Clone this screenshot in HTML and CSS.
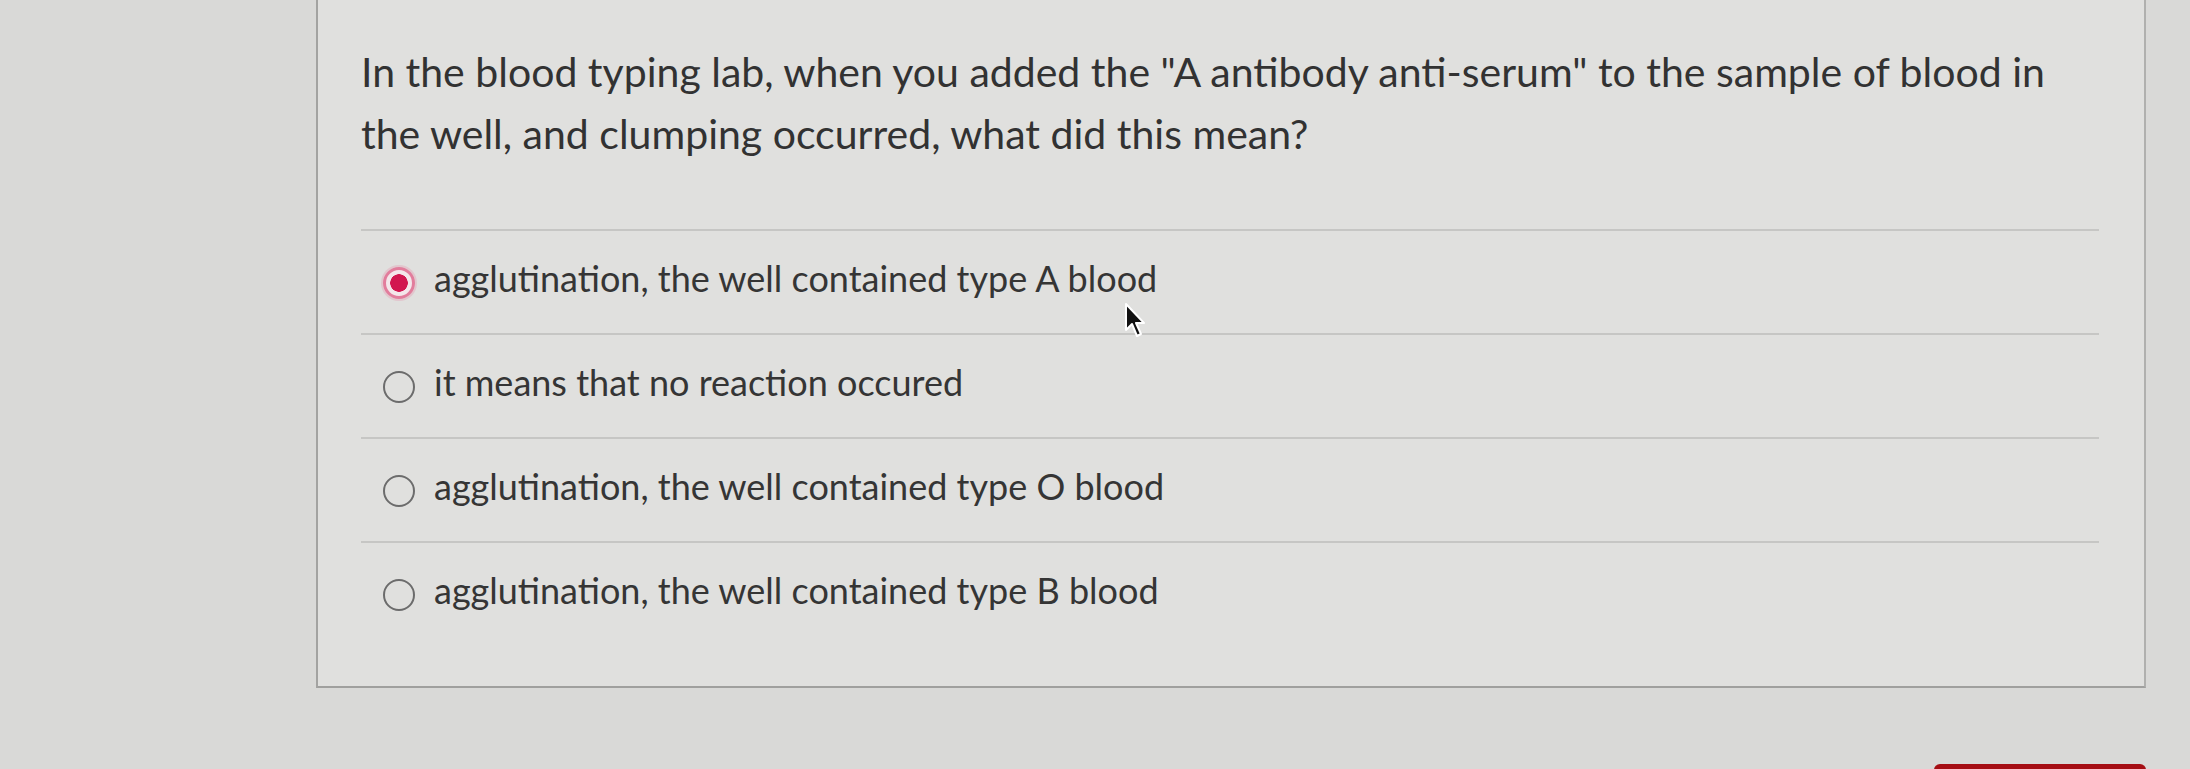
FILE: index.html
```html
<!DOCTYPE html>
<html lang="en">
<head>
<meta charset="utf-8">
<title>Quiz question</title>
<link rel="stylesheet" href="styles.css">
</head>
<body>
<div class="page">
  <div class="card">
    <p class="question">In the blood typing lab, when you added the "A antibody anti-serum" to the sample of blood in the well, and clumping occurred, what did this mean?</p>
    <ul class="options">
      <li class="option"><span class="radio selected"></span><span class="label">agglutination, the well contained type A blood</span></li>
      <li class="option"><span class="radio"></span><span class="label">it means that no reaction occured</span></li>
      <li class="option"><span class="radio"></span><span class="label">agglutination, the well contained type O blood</span></li>
      <li class="option"><span class="radio"></span><span class="label">agglutination, the well contained type B blood</span></li>
    </ul>
  </div>
  <div class="footer">
    <span class="next-btn"></span>
  </div>
  <svg class="cursor" width="24" height="38" viewBox="0 0 24 38" aria-hidden="true">
    <path d="M2 2 L2 28 L8 22 L13 34 L17 32 L12 21 L20 21 Z" fill="#111" stroke="#fff" stroke-width="2" stroke-linejoin="round"/>
  </svg>
</div>
</body>
</html>
```
FILE: styles.css
```css
html, body {
  margin: 0;
  padding: 0;
}
body {
  background: #d9d9d7;
  font-family: Lato, "Open Sans", sans-serif;
  color: #3a3a3a;
  width: 2190px;
  height: 769px;
  overflow: hidden;
}
.page {
  position: relative;
  padding-left: 316px;
  width: 1830px;
}
.card {
  background: #e0e0de;
  border-left: 2px solid #a3a3a1;
  border-right: 2px solid #b0b0ae;
  border-bottom: 2px solid #a0a09e;
  height: 688px;
  box-sizing: border-box;
  padding: 41px 0 0 43px;
}
.question {
  margin: 0;
  font-size: 41px;
  line-height: 62px;
  width: 1720px;
  color: #323232;
}
.options {
  list-style: none;
  margin: 64px 0 0 0;
  padding: 0;
  width: 1738px;
}
.option {
  display: flex;
  align-items: flex-start;
  border-top: 2px solid #c6c6c4;
  height: 104px;
  box-sizing: border-box;
  padding: 27px 0 0 22px;
  gap: 19px;
}
.radio {
  width: 32px;
  height: 32px;
  margin-top: 9px;
  border-radius: 50%;
  border: 2px solid #6c6c6c;
  box-sizing: border-box;
  flex: none;
}
.radio.selected {
  border: 3px solid #e27d9c;
  background: radial-gradient(circle, #d2164f 0 8.5px, #f4e6ea 9px 100%);
  box-shadow: 0 0 0 2px rgba(230, 150, 175, 0.35);
}
.label {
  font-size: 36px;
  line-height: 41px;
  color: #353535;
}
.footer {
  display: flex;
  justify-content: flex-end;
  padding-top: 76px;
}
.next-btn {
  display: block;
  width: 212px;
  height: 40px;
  background: #a50e14;
  border-radius: 6px;
}
.cursor {
  position: absolute;
  left: 1124px;
  top: 302px;
}
```
